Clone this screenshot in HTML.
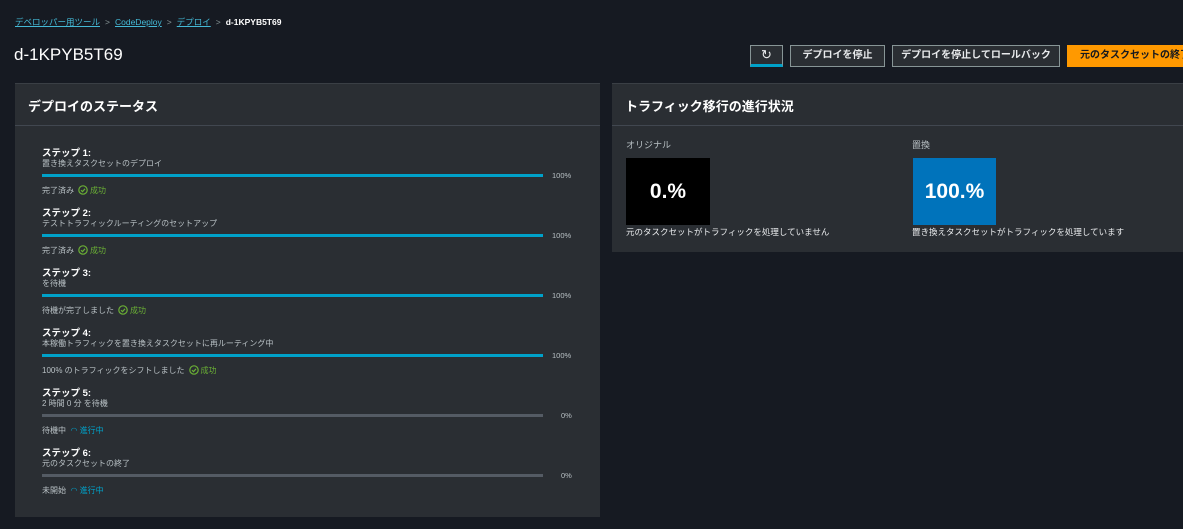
<!DOCTYPE html>
<html><head><meta charset="utf-8"><style>
*{margin:0;padding:0;box-sizing:border-box}
body{width:1183px;height:529px;background:#161a22;font-family:"Liberation Sans","Noto Sans CJK JP",sans-serif;color:#d5dbdb;position:relative;overflow:hidden}
.a{position:absolute;white-space:nowrap}
.bc{font-size:8.5px;top:16px}
.lnk{color:#44b9d6;text-decoration:underline}
.sep{color:#879596;margin:0 5px}
.btn{position:absolute;top:45px;height:22px;border:1px solid #879596;background:#2a2e33;color:#e9ebed;font-size:10px;font-weight:bold;text-align:center;line-height:20px}
.panel{position:absolute;background:#2a2e33;border-top:1px solid #3a3f45}
.ph{height:42px;border-bottom:1px solid #414750;font-size:13px;font-weight:bold;color:#fff;padding:12px 0 0 13px}
.st{font-size:9.5px;font-weight:bold;color:#fff;left:42px}
.sub{font-size:8px;color:#b8c0c4;left:42px}
.bar{left:42px;width:501px;height:3px;background:#00a1c9}
.bar0{background:#545b64}
.pc{font-size:7.5px;color:#b8c0c4}
.ss{font-size:8px;color:#b8c0c4;left:42px}
.ok{color:#6aaf35}
.ip{color:#00a1c9}
svg{vertical-align:-2px;margin:0 2px 0 4px}
</style></head><body>
<div class="a bc" style="left:15px"><span class="lnk">デベロッパー用ツール</span><span class="sep">&gt;</span><span class="lnk">CodeDeploy</span><span class="sep">&gt;</span><span class="lnk">デプロイ</span><span class="sep">&gt;</span><b style="color:#fff">d-1KPYB5T69</b></div>
<div class="a" style="left:14px;top:45px;font-size:17px;color:#fff">d-1KPYB5T69</div>
<div class="btn" style="left:750px;width:33px;border-bottom:3px solid #00a1c9;font-size:13px;font-weight:normal;line-height:18px">↻</div>
<div class="btn" style="left:790px;width:95px">デプロイを停止</div>
<div class="btn" style="left:892px;width:168px">デプロイを停止してロールバック</div>
<div class="btn" style="left:1067px;width:130px;background:#ff9900;border-color:#ff9900;color:#16191f;text-align:left;padding-left:12px">元のタスクセットの終了</div>

<div class="panel" style="left:15px;top:83px;width:585px;height:434px"><div class="ph">デプロイのステータス</div></div>
<div class="panel" style="left:612px;top:83px;width:580px;height:169px"><div class="ph">トラフィック移行の進行状況</div>
<div class="a" style="left:14px;top:54px;font-size:9px;color:#b8c0c4">オリジナル</div>
<div class="a" style="left:14px;top:74px;width:84px;height:67px;background:#000;color:#fff;font-size:21px;font-weight:bold;text-align:center;line-height:67px">0.%</div>
<div class="a" style="left:14px;top:142px;font-size:8.5px;color:#e9ebed">元のタスクセットがトラフィックを処理していません</div>
<div class="a" style="left:300px;top:54px;font-size:9px;color:#b8c0c4">置換</div>
<div class="a" style="left:301px;top:74px;width:83px;height:67px;background:#0073bb;color:#fff;font-size:21px;font-weight:bold;text-align:center;line-height:67px">100.%</div>
<div class="a" style="left:300px;top:142px;font-size:8.5px;color:#e9ebed">置き換えタスクセットがトラフィックを処理しています</div>
</div>

<div class="a st" style="top:145px">ステップ 1:</div><div class="a sub" style="top:158px">置き換えタスクセットのデプロイ</div>
<div class="a bar" style="top:174px"></div><div class="a pc" style="left:552px;top:171px">100%</div>
<div class="a ss" style="top:185px">完了済み<span class="ok"><svg width="10" height="10" viewBox="0 0 10 10"><circle cx="5" cy="5" r="4.2" fill="none" stroke="#6aaf35" stroke-width="1.2"/><path d="M3 5.2l1.5 1.4L7 3.8" fill="none" stroke="#6aaf35" stroke-width="1.2"/></svg>成功</span></div>

<div class="a st" style="top:205px">ステップ 2:</div><div class="a sub" style="top:218px">テストトラフィックルーティングのセットアップ</div>
<div class="a bar" style="top:234px"></div><div class="a pc" style="left:552px;top:231px">100%</div>
<div class="a ss" style="top:245px">完了済み<span class="ok"><svg width="10" height="10" viewBox="0 0 10 10"><circle cx="5" cy="5" r="4.2" fill="none" stroke="#6aaf35" stroke-width="1.2"/><path d="M3 5.2l1.5 1.4L7 3.8" fill="none" stroke="#6aaf35" stroke-width="1.2"/></svg>成功</span></div>

<div class="a st" style="top:265px">ステップ 3:</div><div class="a sub" style="top:278px">を待機</div>
<div class="a bar" style="top:294px"></div><div class="a pc" style="left:552px;top:291px">100%</div>
<div class="a ss" style="top:305px">待機が完了しました<span class="ok"><svg width="10" height="10" viewBox="0 0 10 10"><circle cx="5" cy="5" r="4.2" fill="none" stroke="#6aaf35" stroke-width="1.2"/><path d="M3 5.2l1.5 1.4L7 3.8" fill="none" stroke="#6aaf35" stroke-width="1.2"/></svg>成功</span></div>

<div class="a st" style="top:325px">ステップ 4:</div><div class="a sub" style="top:338px">本稼働トラフィックを置き換えタスクセットに再ルーティング中</div>
<div class="a bar" style="top:354px"></div><div class="a pc" style="left:552px;top:351px">100%</div>
<div class="a ss" style="top:365px">100% のトラフィックをシフトしました<span class="ok"><svg width="10" height="10" viewBox="0 0 10 10"><circle cx="5" cy="5" r="4.2" fill="none" stroke="#6aaf35" stroke-width="1.2"/><path d="M3 5.2l1.5 1.4L7 3.8" fill="none" stroke="#6aaf35" stroke-width="1.2"/></svg>成功</span></div>

<div class="a st" style="top:385px">ステップ 5:</div><div class="a sub" style="top:398px">2 時間 0 分 を待機</div>
<div class="a bar bar0" style="top:414px"></div><div class="a pc" style="left:561px;top:411px">0%</div>
<div class="a ss" style="top:425px">待機中 <span class="ip">&nbsp;◠ 進行中</span></div>

<div class="a st" style="top:445px">ステップ 6:</div><div class="a sub" style="top:458px">元のタスクセットの終了</div>
<div class="a bar bar0" style="top:474px"></div><div class="a pc" style="left:561px;top:471px">0%</div>
<div class="a ss" style="top:485px">未開始 <span class="ip">&nbsp;◠ 進行中</span></div>
</body></html>
